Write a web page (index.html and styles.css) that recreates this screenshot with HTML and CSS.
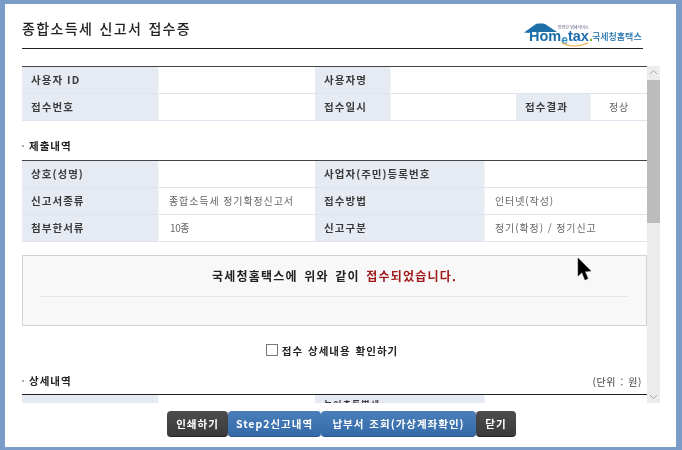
FILE: index.html
```html
<!DOCTYPE html>
<html lang="ko">
<head>
<meta charset="utf-8">
<title>종합소득세 신고서 접수증</title>
<link rel="stylesheet" href="styles.css">
</head>
<body>
<div class="window">
  <header class="head">
    <h1 class="title">종합소득세 신고서 접수증</h1>
    <div class="logo">
      <svg class="logo-house" width="33" height="10" viewBox="0 0 33 10"><path d="M0 9.5 L12 1 Q13 .5 14 .5 L19 .5 Q20 .5 21 1 L33 9 L6 9 L5 10 Z" fill="#1f6fa8"/></svg>
      <span class="logo-slogan">안전한 납세서비스</span>
      <span class="logo-word">Hom<span class="logo-e">e</span>tax<span class="logo-dot">.</span></span>
      <span class="logo-kr">국세청홈택스</span>
      <svg class="logo-smile" width="28" height="5" viewBox="0 0 28 5"><path d="M1 1 Q13 7 27 1" fill="none" stroke="#f0a93a" stroke-width="1.1"/></svg>
    </div>
  </header>
  <div class="scroller">
    <main class="content">
      <div class="grid grid-a">
        <div class="th">사용자 ID</div><div class="td"></div>
        <div class="th">사용자명</div><div class="td span3"></div>
        <div class="th">접수번호</div><div class="td"></div>
        <div class="th">접수일시</div><div class="td"></div>
        <div class="th">접수결과</div><div class="td center">정상</div>
      </div>
      <h2 class="section sec-first">제출내역</h2>
      <div class="grid grid-b">
        <div class="th">상호(성명)</div><div class="td"></div>
        <div class="th">사업자(주민)등록번호</div><div class="td"></div>
        <div class="th">신고서종류</div><div class="td">종합소득세 정기확정신고서</div>
        <div class="th">접수방법</div><div class="td">인터넷(작성)</div>
        <div class="th">첨부한서류</div><div class="td tight">10종</div>
        <div class="th">신고구분</div><div class="td">정기(확정) / 정기신고</div>
      </div>
      <section class="notice">
        <p class="notice-text">국세청홈택스에 위와 같이 <b class="accent">접수되었습니다.</b></p>
        <div class="notice-line"></div>
      </section>
      <label class="check"><span class="box"></span>접수 상세내용 확인하기</label>
      <div class="section-row">
        <h2 class="section">상세내역</h2>
        <span class="unit">(단위 : 원)</span>
      </div>
      <div class="grid grid-b grid-c">
        <div class="th"></div><div class="td"></div>
        <div class="th">농어촌특별세</div><div class="td"></div>
      </div>
    </main>
    <div class="scrollbar">
      <svg class="arrow" width="13" height="14" viewBox="0 0 13 14"><path d="M3 8 L6.5 4.5 L10 8" fill="none" stroke="#a8a8a8"/></svg>
      <div class="thumb"></div>
      <div class="track"></div>
      <svg class="arrow" width="13" height="13" viewBox="0 0 13 13"><path d="M3 5 L6.5 8.5 L10 5" fill="none" stroke="#a8a8a8"/></svg>
    </div>
  </div>
  <footer class="actions">
    <button class="btn dark w1">인쇄하기</button><button class="btn blue w2">Step2신고내역</button><button class="btn blue w3">납부서 조회(가상계좌확인)</button><button class="btn dark w4">닫기</button>
  </footer>
  <svg class="cursor" width="16" height="25" viewBox="0 0 16 25"><path d="M1 1 L1 19 L5 15.5 L8 23 L11 21.5 L8 14.5 L14 14 Z" fill="#000" stroke="#333" stroke-width=".5"/></svg>
</div>
</body>
</html>
```
FILE: styles.css
```css
html, body { margin: 0; padding: 0; }
body {
  width: 682px;
  height: 450px;
  overflow: hidden;
  background: #7b9cc8;
  font-family: "Noto Sans CJK KR", "Liberation Sans", sans-serif;
}
.window {
  position: relative;
  box-sizing: border-box;
  width: 671px;
  height: 443px;
  margin: 4px 6px 3px 5px;
  background: #fff;
  padding: 0 16px 0 17px;
  filter: blur(.45px);
}
.head {
  position: relative;
  width: 621px;
  height: 44px;
  border-bottom: 1px solid #222;
  display: flex;
  align-items: flex-start;
}
.title {
  margin: 14px 0 0;
  font-size: 14px;
  line-height: 20px;
  font-weight: 500;
  letter-spacing: 1.35px;
  color: #222;
  word-spacing: 1px;
}
.logo {
  position: absolute;
  right: 0;
  top: 18px;
  width: 120px;
  height: 26px;
}
.logo-house { position: absolute; left: 1px; top: 1px; }
.logo-slogan { position: absolute; left: 35px; top: 3px; font-size: 4px; line-height: 4px; color: #557; white-space: nowrap; }
.logo-word { position: absolute; left: 6px; top: 9px; font-family: "Liberation Sans", sans-serif; font-weight: 700; font-size: 14.5px; line-height: 11px; color: #1a6da8; white-space: nowrap; }
.logo-e { font-size: 12px; line-height: 8px; color: #2a8fc0; position: relative; top: 3px; }
.logo-dot { color: #7db53f; }
.logo-kr { position: absolute; left: 69px; top: 9px; font-size: 9px; line-height: 12px; font-weight: 500; color: #1a6da8; white-space: nowrap; }
.logo-smile { position: absolute; left: 38px; top: 20px; }
.scroller {
  display: flex;
  margin-top: 17px;
  height: 337px;
  width: 638px;
  overflow: hidden;
}
.content {
  width: 625px;
  flex: none;
  overflow: hidden;
  height: 337px;
}
.scrollbar {
  width: 13px;
  flex: none;
  display: flex;
  flex-direction: column;
  background: #ececec;
}
.arrow { flex: none; display: block; }
.thumb { height: 143px; background: #bcbcbc; flex: none; }
.track { flex: 1; }
.grid {
  display: grid;
  border-top: 1px solid #444;
  font-size: 10px;
  color: #666;
}
.grid-a { grid-template-columns: 137px 156px 76px 125px 75px 56px; grid-auto-rows: 27px; }
.grid-a .span3 { grid-column: span 3; }
.grid-b { grid-template-columns: 137px 156px 170px 162px; grid-auto-rows: 27px; }
.th, .td {
  box-sizing: border-box;
  border-bottom: 1px solid #dfe4ee;
  display: flex;
  align-items: center;
  padding: 0 0 1px 10px;
  white-space: nowrap;
  overflow: hidden;
  letter-spacing: .9px;
}
.th { background: #e6eaf3; color: #3a3a3a; font-weight: 700; font-size: 10.5px; padding-left: 9px; letter-spacing: 1.05px; border-right: 1px solid #f2f4f8; }
.td { background: #fff; }
.tight { letter-spacing: -.4px; padding-left: 11px; }
.center { justify-content: center; padding-left: 0; }
.section {
  margin: 0;
  font-size: 10.5px;
  line-height: 14px;
  font-weight: 700;
  color: #222;
  letter-spacing: 1px;
  padding-left: 7px;
  position: relative;
}
.section::before {
  content: "";
  position: absolute;
  left: 0;
  top: 6px;
  width: 2px;
  height: 2px;
  background: #aaa;
}
.sec-first { margin: 18px 0 7px; }
.notice {
  box-sizing: border-box;
  margin-top: 13px;
  height: 71px;
  background: #f8f8f8;
  border: 1px solid #d2d2d2;
  text-align: center;
}
.notice-text {
  margin: 11px 0 0;
  font-size: 12px;
  line-height: 18px;
  font-weight: 700;
  color: #222;
  letter-spacing: 1.2px;
  word-spacing: 2px;
}
.accent { color: #a01818; font-weight: 700; }
.notice-line { margin: 11px 17px 0; border-top: 1px solid #e6e6e6; }
.check {
  display: flex;
  justify-content: center;
  align-items: center;
  margin-top: 16px;
  height: 16px;
  padding-right: 5px;
  font-size: 10.5px;
  font-weight: 700;
  color: #222;
  letter-spacing: 1px;
  word-spacing: 1px;
}
.box {
  box-sizing: border-box;
  width: 12px;
  height: 12px;
  border: 1px solid #777;
  background: #fff;
  margin-right: 4px;
}
.section-row {
  display: flex;
  justify-content: space-between;
  align-items: flex-end;
  margin-top: 15px;
  height: 15px;
  margin-bottom: 6px;
}
.unit { font-size: 10px; line-height: 12px; color: #444; padding-right: 5px; letter-spacing: .6px; word-spacing: 1px; }
.grid-c { border-top-color: #222; }
.grid-c .th { align-items: flex-start; font-size: 9px; padding-top: 3px; }
.actions {
  display: flex;
  justify-content: flex-start;
  margin: 8px 0 0 145px;
}
.btn {
  box-sizing: border-box;
  height: 26px;
  padding: 0 0 1px;
  border: 0;
  border-radius: 4px;
  color: #fff;
  font-family: inherit;
  font-size: 10.5px;
  font-weight: 700;
  letter-spacing: 1px;
  word-spacing: 1px;
  white-space: nowrap;
}
.dark { background: linear-gradient(#4d4d4d, #3a3a3a); border-bottom: 1px solid #222; }
.blue { background: linear-gradient(#4a7fbb, #346aa8); border-bottom: 1px solid #2a5690; }
.w1 { width: 61px; }
.w2 { width: 93px; }
.w3 { width: 155px; }
.w4 { width: 40px; }
.cursor { position: absolute; left: 572px; top: 253px; }
```
